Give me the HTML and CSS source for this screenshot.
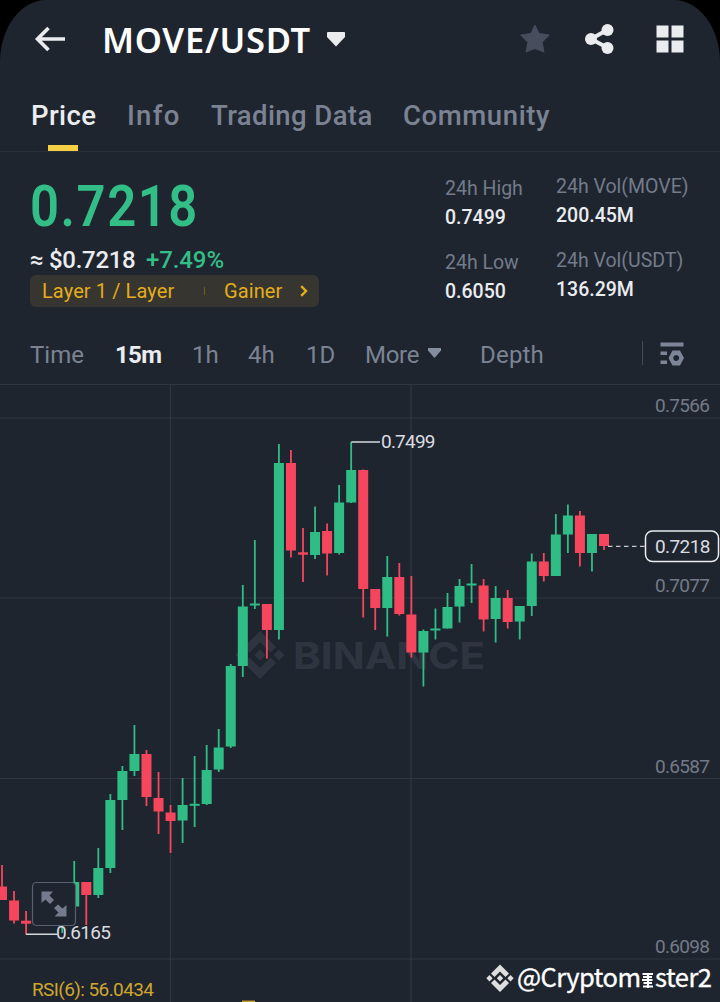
FILE: index.html
```html
<!DOCTYPE html>
<html lang="en">
<head>
<meta charset="utf-8">
<title>MOVE/USDT</title>
<link rel="stylesheet" href="styles.css">
</head>
<body>
<div class="app">
  <header class="header">
    <svg class="back" width="32" height="26" viewBox="0 0 32 26"><path d="M14.500 2L3.500 13L14.500 24M3.500 13H31" fill="none" stroke="#eaecef" stroke-width="3.600"/></svg>
    <h1 class="pair">MOVE/USDT</h1>
    <svg class="caret" width="18" height="15" viewBox="0 0 18 15"><path d="M0.500 0H17.500Q18 0 18 1V5L9 14.500L0 5V1Z" fill="#eaecef"/></svg>
    <div class="actions">
      <svg width="32" height="32" viewBox="0 0 32 32"><path d="M16 2.500L20.100 10.700L30 12L23 19.100L24.800 28.800L16 25.500L7.200 28.800L9 19.100L2 12L11.900 10.700Z" fill="#474d5c" stroke="#474d5c" stroke-width="1.200" stroke-linejoin="round"/></svg>
      <svg width="30" height="32" viewBox="0 0 30 32"><path d="M24 6.500L7 16L24 25" fill="none" stroke="#eaecef" stroke-width="4"/><circle cx="23.500" cy="7" r="6" fill="#eaecef"/><circle cx="7" cy="16" r="6" fill="#eaecef"/><circle cx="23.500" cy="25" r="6" fill="#eaecef"/></svg>
      <svg width="28" height="28" viewBox="0 0 28 28"><path d="M0.500 0.500h12v12h-12zM15.500 0.500h12v12h-12zM0.500 15.500h12v12h-12zM15.500 15.500h12v12h-12z" fill="#eaecef"/></svg>
    </div>
  </header>

  <nav class="tabs">
    <span class="tab tab-price">Price</span>
    <span class="tab tab-info">Info</span>
    <span class="tab tab-data">Trading Data</span>
    <span class="tab tab-community">Community</span>
  </nav>

  <section class="summary">
    <div class="quote">
      <div class="price">0.7218</div>
      <div class="sub"><span class="approx">≈</span><span class="usd">$0.7218</span><span class="change">+7.49%</span></div>
      <div class="tags">
        <span class="tag-layer">Layer 1 / Layer</span><i class="tag-sep"></i><span class="tag-gainer">Gainer</span>
        <svg width="8" height="12" viewBox="0 0 8 12"><path d="M1.200 1.200L6 6L1.200 10.800" fill="none" stroke="#e3ad1c" stroke-width="2.400"/></svg>
      </div>
    </div>
    <div class="stats">
      <div class="stat"><span class="label">24h High</span><span class="value">0.7499</span></div>
      <div class="stat"><span class="label">24h Low</span><span class="value">0.6050</span></div>
    </div>
    <div class="stats stats-volume">
      <div class="stat"><span class="label">24h Vol(MOVE)</span><span class="value">200.45M</span></div>
      <div class="stat"><span class="label">24h Vol(USDT)</span><span class="value">136.29M</span></div>
    </div>
  </section>

  <nav class="intervals">
    <span class="iv iv-time">Time</span>
    <span class="iv iv-15m">15m</span>
    <span class="iv iv-1h">1h</span>
    <span class="iv iv-4h">4h</span>
    <span class="iv iv-1d">1D</span>
    <span class="iv iv-more">More</span>
    <svg class="more-caret" width="13" height="10" viewBox="0 0 13 10"><path d="M0 0H13V2.500L6.500 10L0 2.500Z" fill="#848e9c"/></svg>
    <span class="iv iv-depth">Depth</span>
    <i class="divider"></i>
    <svg class="settings" width="24" height="24" viewBox="0 0 24 24"><path d="M0.500 0.500h23v4h-23zM0.500 9.500h6.500v3.500h-6.500zM0.500 18.500h6.500v3.500h-6.500z" fill="#7d8696"/><path d="M12.500 8.500h7.500l4 7.500-4 7.500h-7.500l-4-7.500zM16.200 13a3 3 0 1 0 .01 0z" fill="#7d8696" fill-rule="evenodd"/></svg>
  </nav>

  <main class="chart">
    <svg id="chart" width="720" height="618" viewBox="0 384 720 618">
      <path class="grid" d="M0 384.500H720M0 418H720M0 598H720M0 778.500H720M0 959H720M170.500 384V1002M411 384V1002"/>
      <g class="watermark">
        <path d="M260 631L276 647L270.500 652.500L260 642L249.500 652.500L244 647ZM260 679L276 663L270.500 657.500L260 668L249.500 657.500L244 663ZM260 649.500L265.500 655L260 660.500L254.500 655ZM279 649.500L284.500 655L279 660.500L273.500 655ZM241 649.500L246.500 655L241 660.500L235.500 655Z"/>
        <text x="293" y="669" textLength="192" lengthAdjust="spacingAndGlyphs">BINANCE</text>
      </g>
      <g id="candles"></g>
      <path d="M351.300 442H380M26 934.300H57" class="leader"/>
      <text class="mark" x="381" y="448" textLength="54.500">0.7499</text>
      <rect x="32.500" y="882.500" width="43" height="43" rx="4" class="expand"/>
      <path d="M41.500 891.500H53L49.500 895.500L54 900L50 904L45.500 899.500L41.500 903ZM66.500 916.500H54.500L58.500 912.500L54 908L58 904.500L62.500 908.500L66.500 905Z" fill="#737b8c"/>
      <text class="mark" x="56" y="939" textLength="55">0.6165</text>
      <path d="M608 546.300H646" class="last-line"/>
      <rect x="645.500" y="531" width="73" height="30.500" rx="7" class="last-box"/>
      <text class="mark" x="655" y="553" textLength="55.500">0.7218</text>
      <g class="axis">
        <text x="655" y="412" textLength="55">0.7566</text>
        <text x="655" y="592" textLength="55">0.7077</text>
        <text x="655" y="773" textLength="55">0.6587</text>
        <text x="655" y="953" textLength="55">0.6098</text>
      </g>
      <text class="rsi" x="32" y="996" textLength="122">RSI(6): 56.0434</text>
      <path d="M242 1001.300H255" stroke="#c9a02c" stroke-width="1.500"/>
      <path class="author-logo" d="M500 964.500L509 973.500L505.500 977L500 971.500L494.500 977L491 973.500ZM500 992L509 983L505.500 979.500L500 985L494.500 979.500L491 983ZM500 975L503.200 978.200L500 981.400L496.800 978.200ZM510.500 975L513.700 978.200L510.500 981.400L507.300 978.200ZM489.500 975L492.700 978.200L489.500 981.400L486.300 978.200Z"/>
      <text class="author" x="517" y="987" textLength="124">@Cryptom</text>
      <text class="author" x="655" y="987" textLength="57">ster2</text>
      <path d="M642.500 974H653M643 977H652M642 980H652.500M643.500 983H652M643 986.500H653M648 973V988" stroke="#fff" stroke-width="2.200"/>
    </svg>
  </main>
</div>
<script src="chart.js"></script>
</body>
</html>
```
FILE: styles.css
```css
* { box-sizing: border-box; }
body { margin: 0; background: #000; font-family: Roboto, "Noto Sans", sans-serif; }
svg { display: block; flex: none; }
.app { width: 720px; height: 1002px; background: #1f252f; border-radius: 46px 46px 0 0 / 62px 62px 0 0; overflow: hidden; }
.header { display: flex; align-items: center; height: 78px; padding: 0 36px 0 34px; }
.pair { margin: 1px 0 0 36px; width: 225px; font: 600 34.500px/40px "Noto Sans", sans-serif; letter-spacing: 0.750px; color: #fff; white-space: nowrap; }
.actions { display: flex; align-items: center; margin-left: auto; }
.actions svg + svg { margin-left: 33px; }
.actions svg + svg + svg { margin-left: 42px; }
.tabs { display: flex; height: 74px; padding-left: 31px; border-bottom: 1px solid #2b313c; }
.tab { position: relative; padding-top: 21px; font: 500 27.500px/34px Roboto, sans-serif; letter-spacing: 0.400px; color: #7b8393; white-space: nowrap; }
.tab-price { width: 96px; color: #eaecef; }
.tab-price::after { content: ""; position: absolute; left: 17px; bottom: 0; width: 30px; height: 6px; background: #f5cf44; }
.tab-info { width: 84px; letter-spacing: 1.300px; }
.tab-data { width: 192px; }
.tab-community { letter-spacing: 0.600px; }
.summary { display: flex; height: 173px; padding: 0 30px; }
.quote { flex: none; width: 415px; }
.price { width: 186px; height: 85px; padding-top: 27px; font-size: 56.500px; line-height: 56px; font-weight: 600; color: #33bd87; letter-spacing: 1.700px; transform: scaleX(0.900); transform-origin: 0 0; }
.sub { display: flex; height: 38px; padding-top: 8px; font-size: 24px; line-height: 30px; font-weight: 500; letter-spacing: -0.300px; color: #eaecef; white-space: nowrap; }
.approx { width: 19px; font-size: 24px; }
.usd { width: 97px; }
.change { color: #33bd87; letter-spacing: -0.100px; }
.tags { display: flex; align-items: center; width: 289px; height: 32px; padding-left: 12px; border-radius: 6px; background: #37352f; color: #e3ad1c; font-size: 20px; letter-spacing: 0.100px; white-space: nowrap; }
.tag-layer { width: 162px; }
.tag-sep { width: 1px; height: 8px; background: #75601f; }
.tag-gainer { width: 76px; margin-left: 19px; }
.stats { flex: none; width: 111px; padding-top: 24px; }
.stats-volume { width: 140px; padding-top: 22px; }
.stat { display: flex; flex-direction: column; height: 74px; white-space: nowrap; }
.label { font-size: 19.500px; line-height: 26px; color: #737b8a; }
.value { margin-top: 2px; font-size: 19.500px; line-height: 28px; font-weight: 500; color: #eaecef; }
.intervals { display: flex; align-items: center; height: 59px; padding: 0 0 0 30px; color: #7b8393; font-size: 24px; }
.iv { white-space: nowrap; }
.iv-time { width: 85px; }
.iv-15m { width: 77px; font-weight: 700; letter-spacing: -0.700px; color: #eaecef; }
.iv-1h { width: 56px; }
.iv-4h { width: 58px; }
.iv-1d { width: 59px; }
.iv-more { width: 62px; letter-spacing: -0.300px; }
.more-caret { margin: 0 0 4px 1px; }
.iv-depth { width: 162px; margin-left: 39px; letter-spacing: 0.200px; }
.divider { width: 1px; height: 24px; margin-bottom: 3px; background: #434955; }
.settings { margin: 0 0 2px 17px; }
.chart { height: 618px; }
.grid { fill: none; stroke: #313742; stroke-width: 1.200; }
.watermark { fill: #2f3540; font: 700 37px Inter, sans-serif; }
.leader { fill: none; stroke: #d4d7dc; stroke-width: 1.500; }
.mark { fill: #d9dce1; font-size: 19px; }
.axis { fill: #737a87; font-size: 19px; }
.expand { fill: #1f252f; stroke: #596171; stroke-width: 1.200; }
.last-line { stroke: #c4c8ce; stroke-width: 1.300; stroke-dasharray: 4.500 3.500; }
.last-box { fill: #1f252f; stroke: #eaecef; stroke-width: 1.500; }
.rsi { fill: #cea62e; font-size: 19px; }
.author { fill: #fff; stroke: #fff; stroke-width: 0.350; font: 400 25.500px "Noto Sans CJK SC", sans-serif; }
.author-logo { fill: #dedede; }
.up { fill: #2fbd85; }
.down { fill: #f6465d; }
```
FILE: chart.js
```js
// Each row: direction, high, body top, body bottom, low. null leaves an empty slot.
const rows = [
  ["down",865,886.5,900,900],["down",891,900.5,920.5,923.5],["down",911,920.7,923.7,934.5],
  null,null,["up",900,900,910,933],
  ["up",861,882,906.5,907],["down",882,882,895,925],["up",848,868,895,898],["up",794,800,868,873],
  ["up",766,771,800,830],["up",725,754,771,776],["down",750,754,797,806],["down",772,798,811.5,834],
  ["down",805,812.5,821,853],["up",778,805,820.5,843],["up",756,803.8,805.8,827],["up",745,770,804,805],
  ["up",729,747.5,769.5,772],["up",664,666,746.5,748],["up",585,606.5,666,677],["up",540,603.5,605.5,609],
  ["down",604,604,630,658.5],["up",444,463,630,639.5],["down",450,463,550.5,557.5],["down",528,552.3,554.7,582],
  ["up",506.5,532,555,559],["down",523.5,531,553.5,575.5],["up",485,502.5,553,554.5],["up",442,470,502.5,503],
  ["down",469.5,470,589,617.5],["down",589,589,608,630],["up",556,577,608,636.5],["down",563,577,614,615.5],
  ["down",576,614.5,652.5,657.5],["up",629.5,631,652.5,686.5],["up",608.5,628.5,630.5,639.5],["up",593,607,628.5,628.5],
  ["up",579,586,606.5,622.5],["up",564,583.5,585.5,603],["down",579,585.5,619.5,631.5],["up",586,598,619,642.5],
  ["down",590,598,622,628.5],["up",606,606,621.5,639.5],["up",553.5,561.5,606,616],["down",553,561.5,576,581.5],
  ["up",514,534.5,576,576],["up",504.5,515.5,534.5,553],["down",511,515.5,553,566.5],["up",534,534,553,571.5],
  ["down",534,534,546,550]
];
const group = document.getElementById("candles");
function bar(type, x, y, width, height) {
  const el = document.createElementNS("http://www.w3.org/2000/svg", "rect");
  el.setAttribute("class", type);
  el.setAttribute("x", x);
  el.setAttribute("y", y);
  el.setAttribute("width", width);
  el.setAttribute("height", height);
  group.appendChild(el);
}
rows.forEach((row, i) => {
  if (!row) return;
  const [type, high, top, bottom, low] = row;
  const x = 2 + 12.04 * i;
  bar(type, x - 0.9, high, 1.8, low - high);
  bar(type, x - 5, top, 10, bottom - top);
});
```
